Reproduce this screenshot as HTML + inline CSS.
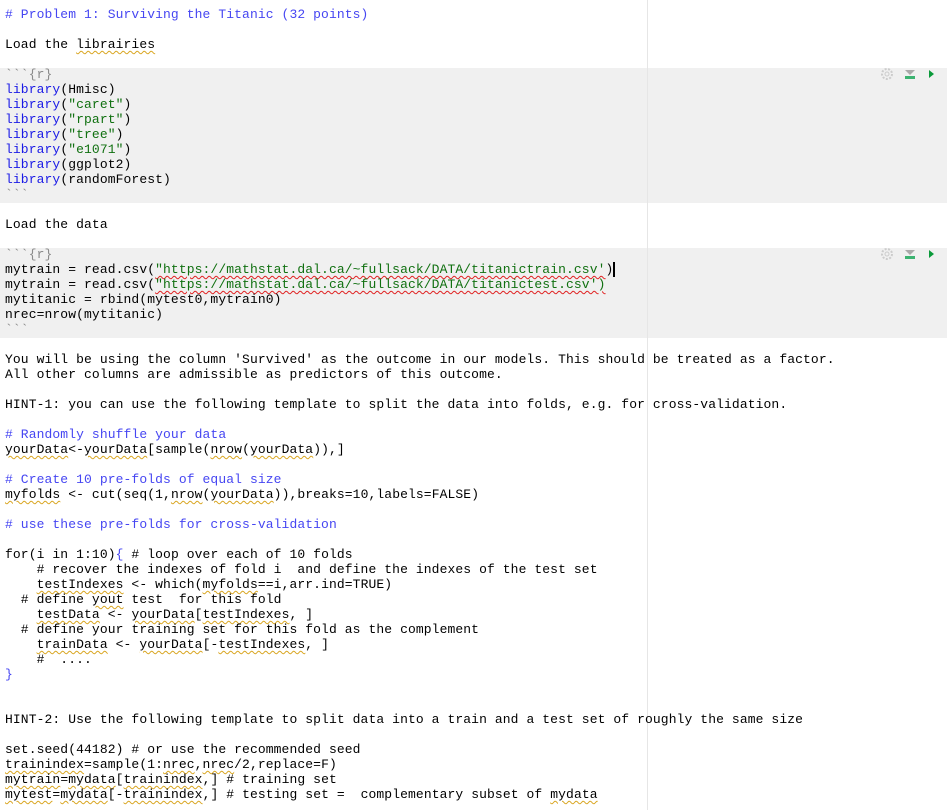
<!DOCTYPE html>
<html><head><meta charset="utf-8"><style>
html,body{margin:0;padding:0;background:#fff;width:947px;height:810px;overflow:hidden;position:relative}
.chunk{position:absolute;left:0;width:947px;background:#f0f0f0}
.margin{position:absolute;left:647px;top:0;width:1px;height:810px;background:#e6e6e6}
pre{position:absolute;left:5px;top:7px;margin:0;font-family:"Liberation Mono",monospace;font-size:13px;line-height:15px;color:#000;letter-spacing:0.1px}
.h{color:#4646f2}.k{color:#1a1ae6}.s{color:#107010}.g{color:#8a8a8a}
.u{text-decoration:underline wavy #d9a520;text-decoration-thickness:1px;text-underline-offset:2px}
.r{text-decoration:underline wavy #e02020;text-decoration-thickness:1px;text-underline-offset:2px}
.cur{border-right:2px solid #000}
</style></head><body>
<div class="chunk" style="top:68px;height:135px"></div>
<div class="chunk" style="top:248px;height:90px"></div>
<div class="margin"></div>
<svg style="position:absolute;left:878px;top:67px" width="64" height="16">
<circle cx="9" cy="7" r="5" fill="none" stroke="#ccc" stroke-width="2" stroke-dasharray="2 1.5"/><circle cx="9" cy="7" r="2" fill="none" stroke="#ccc"/>
<path d="M27 3h10l-5 5z" fill="#aaa"/><rect x="27" y="9" width="10" height="3" fill="#3cb371"/>
<path d="M51 3l5 4-5 4z" fill="#0a9a3a"/></svg>
<svg style="position:absolute;left:878px;top:247px" width="64" height="16">
<circle cx="9" cy="7" r="5" fill="none" stroke="#ccc" stroke-width="2" stroke-dasharray="2 1.5"/><circle cx="9" cy="7" r="2" fill="none" stroke="#ccc"/>
<path d="M27 3h10l-5 5z" fill="#aaa"/><rect x="27" y="9" width="10" height="3" fill="#3cb371"/>
<path d="M51 3l5 4-5 4z" fill="#0a9a3a"/></svg>
<pre><span class="h"># Problem 1: Surviving the Titanic (32 points)</span>

Load the <span class="u">librairies</span>

<span class="g">&#96;&#96;&#96;{r}</span>
<span class="k">library</span>(Hmisc)
<span class="k">library</span>(<span class="s">"caret"</span>)
<span class="k">library</span>(<span class="s">"rpart"</span>)
<span class="k">library</span>(<span class="s">"tree"</span>)
<span class="k">library</span>(<span class="s">"e1071"</span>)
<span class="k">library</span>(ggplot2)
<span class="k">library</span>(randomForest)
<span class="g">&#96;&#96;&#96;</span>

Load the data

<span class="g">&#96;&#96;&#96;{r}</span>
mytrain = read.csv(<span class="s r">"https://mathstat.dal.ca/~fullsack/DATA/titanictrain.csv'</span>)<span class="cur"></span>
mytrain = read.csv(<span class="s r">"https://mathstat.dal.ca/~fullsack/DATA/titanictest.csv')</span>
mytitanic = rbind(mytest0,mytrain0)
nrec=nrow(mytitanic)
<span class="g">&#96;&#96;&#96;</span>

You will be using the column 'Survived' as the outcome in our models. This should be treated as a factor.
All other columns are admissible as predictors of this outcome.

HINT-1: you can use the following template to split the data into folds, e.g. for cross-validation.

<span class="h"># Randomly shuffle your data</span>
<span class="u">yourData</span>&lt;-<span class="u">yourData</span>[sample(<span class="u">nrow</span>(<span class="u">yourData</span>)),]

<span class="h"># Create 10 pre-folds of equal size</span>
<span class="u">myfolds</span> &lt;- cut(seq(1,<span class="u">nrow</span>(<span class="u">yourData</span>)),breaks=10,labels=FALSE)

<span class="h"># use these pre-folds for cross-validation</span>

for(i in 1:10)<span class="h">{</span> # loop over each of 10 folds
    # recover the indexes of fold i  and define the indexes of the test set
    <span class="u">testIndexes</span> &lt;- which(<span class="u">myfolds</span>==i,arr.ind=TRUE)
  # define <span class="u">yout</span> test  for this fold
    <span class="u">testData</span> &lt;- <span class="u">yourData</span>[<span class="u">testIndexes</span>, ]
  # define your training set for this fold as the complement
    <span class="u">trainData</span> &lt;- <span class="u">yourData</span>[-<span class="u">testIndexes</span>, ]
    #  ....
<span class="h">}</span>


HINT-2: Use the following template to split data into a train and a test set of roughly the same size

set.seed(44182) # or use the recommended seed
<span class="u">trainindex</span>=sample(1:<span class="u">nrec</span>,<span class="u">nrec</span>/2,replace=F)
<span class="u">mytrain</span>=<span class="u">mydata</span>[<span class="u">trainindex</span>,] # training set
<span class="u">mytest</span>=<span class="u">mydata</span>[-<span class="u">trainindex</span>,] # testing set =  complementary subset of <span class="u">mydata</span></pre>
</body></html>
